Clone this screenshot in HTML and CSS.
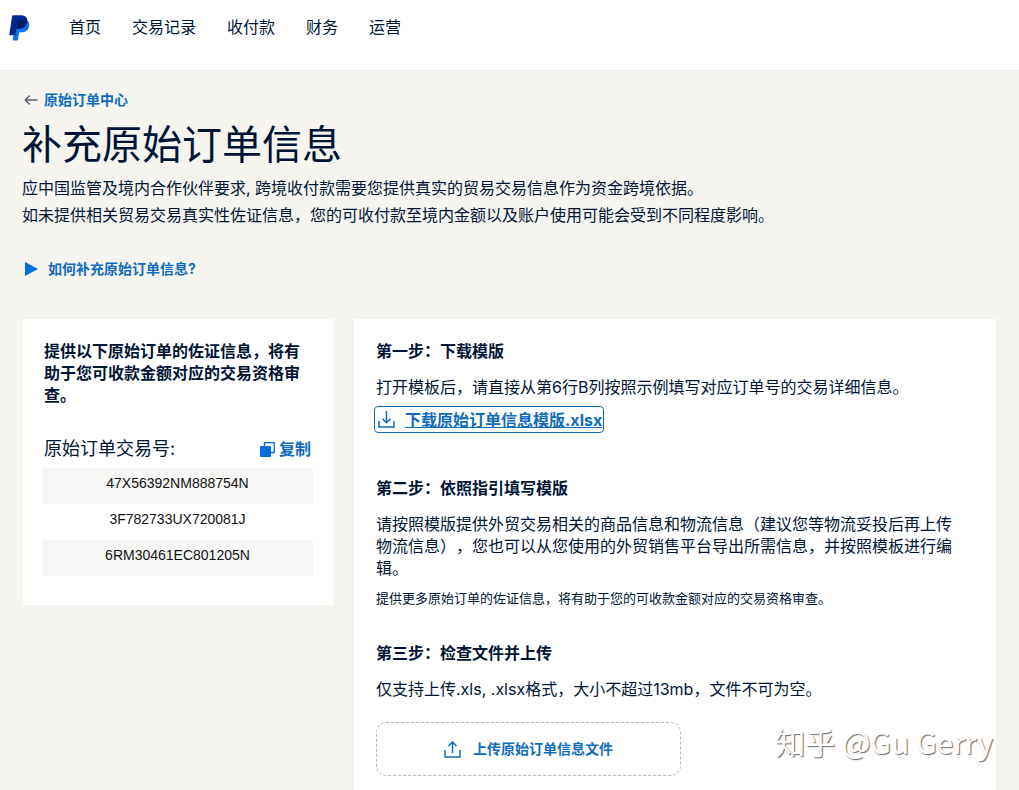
FILE: index.html
```html
<!DOCTYPE html>
<html lang="zh-CN">
<head>
<meta charset="utf-8">
<meta name="viewport" content="width=device-width, initial-scale=1">
<title>补充原始订单信息</title>
<link rel="stylesheet" href="styles.css">
</head>
<body>
<header class="topbar">
  <a class="logo" href="#" aria-label="PayPal">
    <svg width="22" height="26" viewBox="0 0 22 26" aria-hidden="true">
      <path fill="#1072eb" d="M8 6h11c1.300 1.500 1.500 3.200 1.100 5.200-.9 4.200-3.800 6-7.600 6h-1.500c-.5 0-.8.3-.9.8l-1.100 6.700c-.1.500-.4.800-.9.800H4.200c-.4 0-.6-.3-.5-.7L5 17z"/>
      <path fill="#002991" d="M4.100.3h7.600c4.600 0 7.300 2.400 6.600 6.700-.8 4.500-4 6.600-8 6.600H8.500c-.6 0-1 .4-1.100 1l-1 5.600H.8c-.4 0-.6-.3-.5-.7L3.100 1.200c.1-.6.500-.9 1-.9z"/>
      <path fill="#001c64" d="M8.300 6.200c.1-.5.500-.8 1-.8h5.900c1.200 0 2.200.2 3.100.7-.3 5-3.500 7.500-8 7.500H8.500c-.6 0-1 .3-1.200.8z"/>
    </svg>
  </a>
  <nav class="nav">
    <a href="#">首页</a>
    <a href="#">交易记录</a>
    <a href="#">收付款</a>
    <a href="#">财务</a>
    <a href="#">运营</a>
  </nav>
</header>

<main class="page">
  <a class="back" href="#">
    <svg width="14" height="12" viewBox="0 0 14 12" fill="none" stroke="#545d68" stroke-width="1.300" aria-hidden="true"><path d="M13.500 6H1M5.800 1.500 1.200 6l4.600 4.500"/></svg>
    <span>原始订单中心</span>
  </a>
  <h1 class="title">补充原始订单信息</h1>
  <p class="intro">应中国监管及境内合作伙伴要求, 跨境收付款需要您提供真实的贸易交易信息作为资金跨境依据。<br>如未提供相关贸易交易真实性佐证信息，您的可收付款至境内金额以及账户使用可能会受到不同程度影响。</p>
  <a class="howto" href="#">
    <svg width="13" height="14" viewBox="0 0 13 14" aria-hidden="true"><path fill="#0070e0" d="M0 0l13 7-13 7z"/></svg>
    <span>如何补充原始订单信息?</span>
  </a>

  <div class="cards">
    <section class="card orders">
      <h2 class="heading">提供以下原始订单的佐证信息，将有助于您可收款金额对应的交易资格审查。</h2>
      <div class="orders-bar">
        <span id="orders-label">原始订单交易号:</span>
        <button class="copy" type="button">
          <svg width="15" height="15" viewBox="0 0 15 15" aria-hidden="true"><path fill="none" stroke="#0070e0" stroke-width="1.300" d="M4.500 4V.700h9.800v9.800H11"/><rect y="4" width="11" height="11" rx="1" fill="#0070e0"/></svg>
          <span>复制</span>
        </button>
      </div>
      <table class="ids" aria-labelledby="orders-label">
        <tbody>
          <tr><td>47X56392NM888754N</td></tr>
          <tr><td>3F782733UX720081J</td></tr>
          <tr><td>6RM30461EC801205N</td></tr>
        </tbody>
      </table>
    </section>

    <div class="card steps">
      <section class="step">
        <h2 class="heading">第一步：下载模版</h2>
        <p>打开模板后，请直接从第6行B列按照示例填写对应订单号的交易详细信息。</p>
        <a class="download" href="#">
          <svg width="17" height="17" viewBox="0 0 17 17" fill="none" stroke="#0f6cbd" stroke-width="1.500" aria-hidden="true"><path d="M8.500 0v11.500M4.500 7.700l4 4 4-4M1 10v6h15v-6"/></svg>
          <span>下载原始订单信息模版.xlsx</span>
        </a>
      </section>
      <section class="step">
        <h2 class="heading">第二步：依照指引填写模版</h2>
        <p>请按照模版提供外贸交易相关的商品信息和物流信息（建议您等物流妥投后再上传物流信息），您也可以从您使用的外贸销售平台导出所需信息，并按照模板进行编辑。</p>
        <p class="note">提供更多原始订单的佐证信息，将有助于您的可收款金额对应的交易资格审查。</p>
      </section>
      <section class="step">
        <h2 class="heading">第三步：检查文件并上传</h2>
        <p>仅支持上传.xls, .xlsx格式，大小不超过13mb，文件不可为空。</p>
        <button class="upload" type="button">
          <svg width="17" height="17" viewBox="0 0 17 17" fill="none" stroke="#0f6cbd" stroke-width="1.500" aria-hidden="true"><path d="M8.500 12V1M4.500 5l4-4 4 4M1 9v7h15V9"/></svg>
          <span>上传原始订单信息文件</span>
        </button>
      </section>
    </div>
  </div>
</main>
<div class="watermark">知乎 @Gu Gerry</div>
</body>
</html>
```
FILE: styles.css
```css
* {
  box-sizing: border-box;
}

body {
  position: relative;
  display: flex;
  flex-direction: column;
  min-height: 100vh;
  margin: 0;
  background: #f5f4ef;
  color: #001435;
  font-family: Inter, "Noto Sans CJK SC", sans-serif;
  font-size: 16px;
  line-height: 22px;
  text-spacing-trim: space-all;
}

h1, h2, p {
  margin: 0;
}

a {
  color: inherit;
  text-decoration: none;
}

button {
  padding: 0;
  border: 0;
  background: none;
  font: inherit;
  cursor: pointer;
}

svg {
  display: block;
  flex: none;
}

.topbar {
  display: flex;
  align-items: flex-start;
  gap: 38px;
  height: 71px;
  padding: 15px 9px 0;
  border-bottom: 1px solid #ecebe8;
  background: #fff;
}

.nav {
  display: flex;
  gap: 31px;
  padding-top: 1px;
}

.page {
  display: flex;
  flex: 1;
  flex-direction: column;
  align-items: flex-start;
  padding: 19px 23px 0 22px;
}

.back,
.howto {
  display: flex;
  align-items: center;
  color: #0f6cbd;
  font-size: 14px;
  font-weight: 700;
  line-height: 20px;
}

.back {
  gap: 6px;
  padding-left: 2px;
}

.title {
  margin-top: 11px;
  font-size: 40px;
  font-weight: 400;
  line-height: 48px;
}

.intro {
  margin-top: 6px;
  line-height: 27px;
}

.howto {
  gap: 10px;
  margin-top: 30px;
  padding-left: 3px;
}

.cards {
  display: grid;
  flex: 1;
  grid-template-columns: minmax(0, 310fr) minmax(0, 642fr);
  gap: 21px;
  align-self: stretch;
  margin: 40px 0 0 1px;
}

.card {
  background: #fff;
}

.heading {
  font-size: 16px;
  font-weight: 700;
  line-height: 22px;
}

.orders {
  align-self: start;
  padding: 21px 20px 29px 19px;
}

.orders .heading {
  padding: 0 1px 0 2px;
}

.orders-bar {
  display: flex;
  align-items: center;
  justify-content: space-between;
  margin-top: 30px;
  padding: 0 2px;
  font-size: 18px;
  line-height: 26px;
}

.copy {
  display: flex;
  align-items: center;
  gap: 4px;
  color: #0f6cbd;
  font-size: 16px;
  font-weight: 700;
}

.ids {
  width: 100%;
  margin-top: 6px;
  border-collapse: collapse;
  color: #111;
  font-family: "Liberation Sans", Arial, sans-serif;
  font-size: 14px;
  line-height: 20px;
  text-align: center;
}

.ids td {
  padding: 5px 0 11px;
}

.ids tr:nth-child(odd) {
  background: #f7f7f5;
}

.steps {
  padding: 21px 36px 14px 22px;
}

.step p {
  margin-top: 14px;
}

.step + .step {
  margin-top: 44px;
}

.step + .step + .step {
  margin-top: 34px;
}

.step .note {
  margin-top: 9px;
  font-size: 13px;
  line-height: 20px;
}

.download {
  display: inline-flex;
  align-items: center;
  gap: 10px;
  height: 27px;
  margin: 8px 0 0 -2px;
  padding: 0 1px 0 3px;
  border: 1px solid #0f6cbd;
  border-radius: 4px;
  color: #0f6cbd;
  font-weight: 700;
  text-decoration: underline;
  vertical-align: top;
}

.upload {
  display: flex;
  align-items: center;
  justify-content: center;
  gap: 12px;
  width: 305px;
  max-width: 100%;
  height: 54px;
  margin-top: 22px;
  border: 1px dashed #b4b6ba;
  border-radius: 10px;
  color: #0f6cbd;
  font-size: 14px;
  font-weight: 700;
}

.watermark {
  position: absolute;
  right: 26px;
  bottom: 29px;
  color: #fff;
  font-family: "Noto Sans CJK SC", sans-serif;
  font-size: 30px;
  line-height: 40px;
  text-shadow: 1px 1px 1px #777, 1px 1px 1px #bbb;
  pointer-events: none;
}
```
